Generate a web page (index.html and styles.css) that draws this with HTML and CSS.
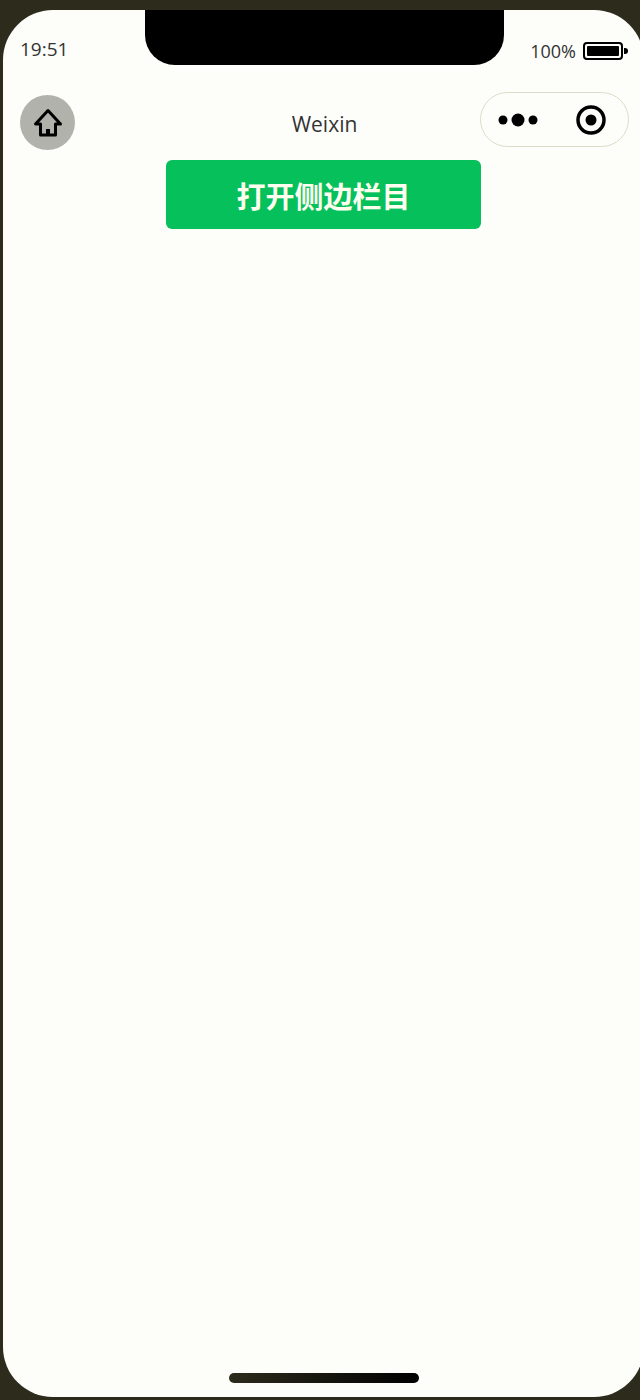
FILE: index.html
```html
<!DOCTYPE html>
<html lang="zh-CN">
<head>
    <meta charset="UTF-8">
    <meta name="viewport" content="width=device-width, initial-scale=1">
    <title>Weixin</title>
    <link rel="stylesheet" href="styles.css">
</head>
<body>

    <div class="phone">
        <header>
            <div class="status-bar">
                <span class="time">19:51</span>
                <div class="notch"></div>
                <div class="battery">
                    <span>100%</span>
                    <svg width="46" height="18" viewBox="0 0 46 18" aria-hidden="true">
                        <rect x="1" y="1" width="38" height="16" rx="3" fill="none" stroke="#000" stroke-width="2"/>
                        <rect x="4" y="4" width="32" height="10" rx="1" fill="#000"/>
                        <path d="M41 6h1a3 3 0 0 1 0 6h-1z" fill="#000"/>
                    </svg>
                </div>
            </div>

            <nav class="nav-bar">
                <button type="button" class="home-button" aria-label="首页">
                    <svg width="30" height="30" viewBox="0 0 30 30" fill="none" stroke="#000" stroke-width="3" stroke-linejoin="round" aria-hidden="true">
                        <path d="M15 2.500L2.500 16H7.500V27H22.500V16H27.500Z"/>
                        <path d="M15 21V27" stroke-width="4"/>
                    </svg>
                </button>
                <h1>Weixin</h1>
                <div class="capsule">
                    <button type="button" aria-label="更多">
                        <svg width="40" height="30" viewBox="0 0 40 30" aria-hidden="true">
                            <circle cx="5" cy="15" r="4.500"/>
                            <circle cx="20" cy="15" r="6.500"/>
                            <circle cx="35" cy="15" r="4.500"/>
                        </svg>
                    </button>
                    <button type="button" aria-label="关闭">
                        <svg width="30" height="30" viewBox="0 0 30 30" aria-hidden="true">
                            <circle cx="15" cy="15" r="13" fill="none" stroke="#000" stroke-width="3.500"/>
                            <circle cx="15" cy="15" r="5.500"/>
                        </svg>
                    </button>
                </div>
            </nav>
        </header>

        <main>
            <button type="button" class="open-button">打开侧边栏目</button>
        </main>

        <div class="home-indicator"></div>
    </div>

</body>
</html>
```

FILE: styles.css
```css
* {
    box-sizing: border-box;
}
body {
    margin: 0;
    padding: 10px 0 3px 3px;
    min-height: 100vh;
    display: flex;
    overflow: hidden;
    background-color: #2d2b1c;
    font-family: "Open Sans", "Noto Sans", "Noto Sans CJK SC", sans-serif;
    color: #333;
}
button {
    padding: 0;
    border: none;
    background: none;
    font-family: inherit;
    cursor: pointer;
}
svg {
    display: block;
}
.phone {
    flex: 1;
    display: flex;
    flex-direction: column;
    /* the right bezel runs just off the window */
    margin-right: -4px;
    background-color: #fdfdfa;
    border-radius: 50px;
    overflow: hidden;
}
.status-bar {
    display: grid;
    grid-template-columns: 1fr 59% 1fr;
    height: 79px;
    padding: 0 14px 0 18px;
}
.notch {
    height: 55px;
    background-color: #000;
    border-radius: 0 0 30px 30px;
}
.status-bar,
.nav-bar {
    padding: 0 15px 0 17px;
}
.time {
    padding-top: 25px;
    font-size: 19px;
    line-height: 28px;
}
.battery {
    display: flex;
    justify-content: flex-end;
    align-items: center;
    gap: 7px;
    height: 28px;
    margin-top: 27px;
    font-size: 18px;
}
.nav-bar {
    display: grid;
    grid-template-columns: 1fr auto 1fr;
    align-items: center;
}
.nav-bar h1 {
    margin: 0;
    padding-top: 8px;
    font-size: 21px;
    line-height: 28px;
    font-weight: normal;
}
.home-button {
    display: flex;
    justify-content: center;
    align-items: center;
    width: 55px;
    height: 55px;
    margin-top: 6px;
    border-radius: 50%;
    background-color: #b2b2ad;
}
.capsule {
    justify-self: end;
    display: flex;
    width: 149px;
    height: 55px;
    border: 1px solid #dcdcc8;
    border-radius: 28px;
}
.capsule button {
    flex: 1;
    display: flex;
    justify-content: center;
    align-items: center;
}
main {
    flex: 1;
    padding-top: 10px;
}
.open-button {
    display: block;
    width: 49%;
    height: 69px;
    margin: 0 auto;
    border-radius: 6px;
    background-color: #06c05c;
    color: #fffff0;
    font-family: "Noto Sans CJK SC", sans-serif;
    font-size: 29px;
    font-weight: bold;
}
.home-indicator {
    width: 190px;
    height: 10px;
    margin: 0 auto 14px;
    border-radius: 5px;
    background: linear-gradient(to right, #2d2b1c, #000);
}
```
